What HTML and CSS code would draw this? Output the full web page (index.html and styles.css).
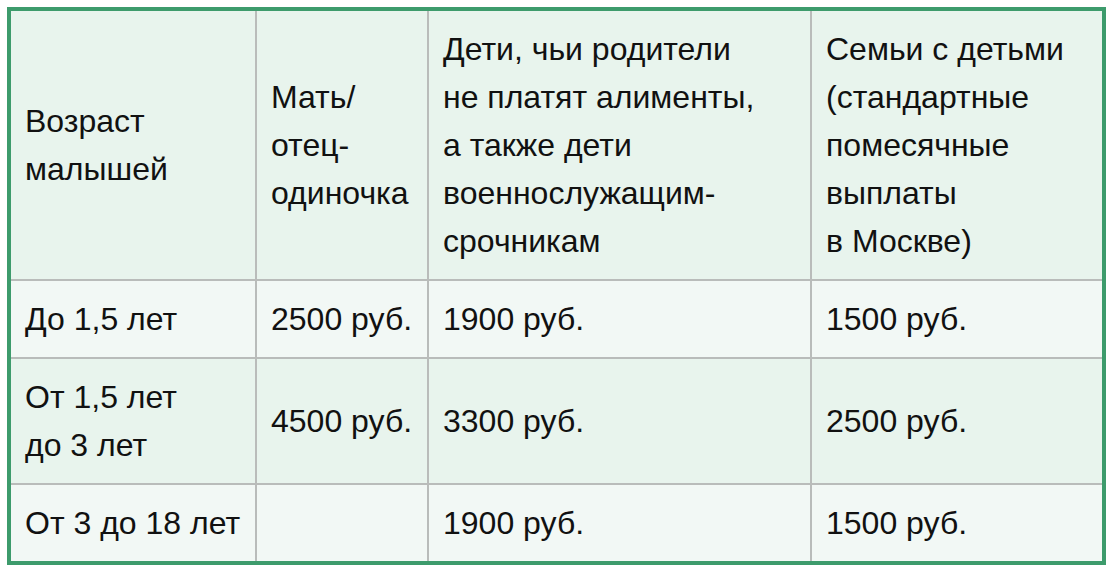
FILE: index.html
```html
<!DOCTYPE html>
<html lang="ru">
<head>
<meta charset="utf-8">
<link rel="stylesheet" href="styles.css">
</head>
<body>
<div class="page">
  <div class="table">
    <div class="cell head">Возраст<br>малышей</div>
    <div class="cell head">Мать/<br>отец-<br>одиночка</div>
    <div class="cell head">Дети, чьи родители<br>не платят алименты,<br>а также дети<br>военнослужащим-<br>срочникам</div>
    <div class="cell head last">Семьи с детьми<br>(стандартные<br>помесячные<br>выплаты<br>в Москве)</div>

    <div class="cell light">До 1,5 лет</div>
    <div class="cell light">2500 руб.</div>
    <div class="cell light">1900 руб.</div>
    <div class="cell light last">1500 руб.</div>

    <div class="cell green">От 1,5 лет<br>до 3 лет</div>
    <div class="cell green">4500 руб.</div>
    <div class="cell green">3300 руб.</div>
    <div class="cell green last">2500 руб.</div>

    <div class="cell light bottom">От 3 до 18 лет</div>
    <div class="cell light bottom"></div>
    <div class="cell light bottom">1900 руб.</div>
    <div class="cell light bottom last">1500 руб.</div>
  </div>
</div>
</body>
</html>
```
FILE: styles.css
```css
html, body {
  margin: 0;
  padding: 0;
  background: #ffffff;
}
.page {
  padding: 7px 8px 11px 7px;
}
.table {
  display: grid;
  grid-template-columns: 246px 172px 383px 290px;
  border: 4px solid #3d9b6c;
  width: 1091px;
  font-family: "Liberation Sans", Arial, sans-serif;
  font-size: 32px;
  line-height: 48px;
  color: #111111;
}
.cell {
  box-sizing: border-box;
  display: flex;
  align-items: center;
  padding: 14px 13px 14px 14px;
  border-right: 2px solid #b9bcba;
  border-bottom: 2px solid #b9bcba;
  white-space: nowrap;
}
.cell.last {
  border-right: none;
}
.cell.bottom {
  border-bottom: none;
}
.head, .green {
  background: #e8f4ed;
}
.light {
  background: #f2f8f5;
}
```
